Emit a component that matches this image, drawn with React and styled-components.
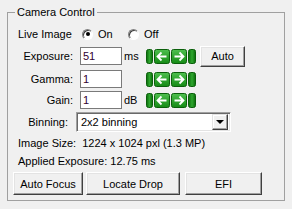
import React, { useId } from 'react';
import styled, { createGlobalStyle } from 'styled-components';

const GlobalStyle = createGlobalStyle`
  html, body {
    margin: 0;
    padding: 0;
    background: #f0f0f0;
  }
  body {
    font-family: "Liberation Sans", Arial, sans-serif;
    font-size: 11px;
    color: #000;
  }
`;

const Page = styled.div`
  width: 292px;
  height: 209px;
  padding: 6px 0 0 7px;
  box-sizing: border-box;
`;

// group box
const GroupBox = styled.fieldset`
  margin: 0;
  padding: 0;
  width: 278px;
  min-width: 0;
  box-sizing: border-box;
  border: 1px solid #a0a0a0;
`;

const Legend = styled.legend`
  margin-left: 7px;
  padding: 0 2px;
  height: 13px;
  line-height: 13px;
`;

const Body = styled.div`
  display: flex;
  flex-direction: column;
  gap: 3px;
  padding: 7px 0 5px 0;
`;

const Row = styled.div`
  display: flex;
  align-items: center;
  height: ${p => p.$h}px;
  padding-left: ${p => p.$pad || 0}px;
`;

const Label = styled.span`
  flex: none;
  width: ${p => p.$w}px;
  margin-right: ${p => p.$gap}px;
  text-align: right;
`;

const PlainLabel = styled.span`
  flex: none;
  width: ${p => p.$w}px;
`;

// radio
const RadioOption = styled.label`
  display: flex;
  align-items: center;
  gap: 5px;
  width: ${p => (p.$w ? `${p.$w}px` : 'auto')};
`;

const RadioDot = styled.span`
  position: relative;
  width: 11px;
  height: 11px;
  box-sizing: border-box;
  border-radius: 50%;
  border: 1px solid;
  border-color: #808080 #fff #fff #808080;
  background: #fff;
  box-shadow: inset 1px 1px 0 #404040;

  &::after {
    content: '';
    display: ${p => (p.$checked ? 'block' : 'none')};
    position: absolute;
    left: 2.5px;
    top: 2.5px;
    width: 4px;
    height: 4px;
    border-radius: 50%;
    background: #000;
  }
`;

// text boxes
const TextBox = styled.div`
  flex: none;
  width: 42px;
  height: 18px;
  box-sizing: border-box;
  border: 1px solid #7a7a7a;
  background: #fff;
  padding-left: 2px;
  line-height: 16px;
  color: #300030;
`;

const Unit = styled.span`
  flex: none;
  width: 22px;
  margin-left: 2px;
`;

const ArrowStrip = styled.svg`
  flex: none;
  display: block;
`;

const Button = styled.div`
  flex: none;
  width: ${p => p.$w}px;
  height: ${p => p.$h || 23}px;
  margin-left: ${p => p.$ml || 0}px;
  box-sizing: border-box;
  display: flex;
  align-items: center;
  justify-content: center;
  background: #f0f0f0;
  border: 1px solid;
  border-color: #fff #404040 #404040 #fff;
  box-shadow: inset -1px -1px 0 #a0a0a0, inset 1px 1px 0 #e3e3e3;
  color: #000;
`;

// combo box
const Combo = styled.div`
  flex: none;
  width: 155px;
  height: 20px;
  box-sizing: border-box;
  display: flex;
  align-items: center;
  background: #fff;
  border: 1px solid;
  border-color: #a0a0a0 #fff #fff #a0a0a0;
  box-shadow: inset 1px 1px 0 #696969, inset -1px -1px 0 #e3e3e3;
  padding: 2px;
`;

const ComboText = styled.span`
  flex: 1;
  padding-left: 2px;
`;

const DropButton = styled.span`
  flex: none;
  width: 16px;
  height: 16px;
  box-sizing: border-box;
  display: flex;
  align-items: center;
  justify-content: center;
  background: #f0f0f0;
  border: 1px solid;
  border-color: #e3e3e3 #404040 #404040 #e3e3e3;
  box-shadow: inset -1px -1px 0 #a0a0a0, inset 1px 1px 0 #fff;

  &::after {
    content: '';
    border-left: 4px solid transparent;
    border-right: 4px solid transparent;
    border-top: 4px solid #000;
  }
`;

const InfoLine = styled.div`
  height: ${p => p.$h}px;
  line-height: ${p => p.$h}px;
  padding-left: 10px;
  white-space: pre;
`;

const ButtonBar = styled.div`
  display: flex;
  height: 23px;
  padding-left: 5px;
`;

const StepArrows = () => {
  const id = useId();
  const cap = `cap${id}`;
  const btn = `btn${id}`;
  return (
    <ArrowStrip width="50" height="15" viewBox="0 0 50 15">
      <defs>
        <linearGradient id={cap} x1="0" x2="1" y1="0" y2="0">
          <stop offset="0" stopColor="#0a6a0a" />
          <stop offset="0.5" stopColor="#2fa82f" />
          <stop offset="1" stopColor="#0a6a0a" />
        </linearGradient>
        <linearGradient id={btn} x1="0" x2="0" y1="0" y2="1">
          <stop offset="0" stopColor="#4fc04f" />
          <stop offset="1" stopColor="#148a14" />
        </linearGradient>
      </defs>
      <rect x="0.5" y="0.5" width="6" height="14" rx="2" fill={`url(#${cap})`} stroke="#0b5f0b" />
      <rect x="8.5" y="0.5" width="15" height="14" rx="2" fill={`url(#${btn})`} stroke="#0b5f0b" />
      <path d="M20.5 7.5H11.5M15.5 3.5L11.5 7.5L15.5 11.5" stroke="#fff" strokeWidth="1.8" fill="none" />
      <rect x="25.5" y="0.5" width="15" height="14" rx="2" fill={`url(#${btn})`} stroke="#0b5f0b" />
      <path d="M28.5 7.5H37.5M33.5 3.5L37.5 7.5L33.5 11.5" stroke="#fff" strokeWidth="1.8" fill="none" />
      <rect x="42.5" y="0.5" width="7" height="14" rx="2" fill={`url(#${cap})`} stroke="#0b5f0b" />
    </ArrowStrip>
  );
};

const NumberRow = ({ label, value, unit, children }) => (
  <>
    <Label $w={65} $gap={7}>{label}</Label>
    <TextBox>{value}</TextBox>
    <Unit>{unit}</Unit>
    <StepArrows />
    {children}
  </>
);

export default function App() {
  return (
    <Page>
      <GlobalStyle />
      <GroupBox>
        <Legend>Camera Control</Legend>
        <Body>
          <Row $h={16} $pad={10}>
            <PlainLabel $w={64}>Live Image</PlainLabel>
            <RadioOption $w={46}>
              <RadioDot $checked />
              On
            </RadioOption>
            <RadioOption>
              <RadioDot />
              Off
            </RadioOption>
          </Row>

          <Row $h={22}>
            <NumberRow label="Exposure:" value="51" unit="ms">
              <Button $w={45} $h={21} $ml={4}>Auto</Button>
            </NumberRow>
          </Row>

          <Row $h={18}>
            <NumberRow label="Gamma:" value="1" />
          </Row>

          <Row $h={18}>
            <NumberRow label="Gain:" value="1" unit="dB" />
          </Row>

          <Row $h={20}>
            <Label $w={60} $gap={8}>Binning:</Label>
            <Combo>
              <ComboText>2x2 binning</ComboText>
              <DropButton />
            </Combo>
          </Row>

          <InfoLine $h={16}>Image Size:  1224 x 1024 pxl (1.3 MP)</InfoLine>
          <InfoLine $h={15}>Applied Exposure: 12.75 ms</InfoLine>

          <ButtonBar>
            <Button $w={70}>Auto Focus</Button>
            <Button $w={94} $ml={3}>Locate Drop</Button>
            <Button $w={77} $ml={5}>EFI</Button>
          </ButtonBar>
        </Body>
      </GroupBox>
    </Page>
  );
}
